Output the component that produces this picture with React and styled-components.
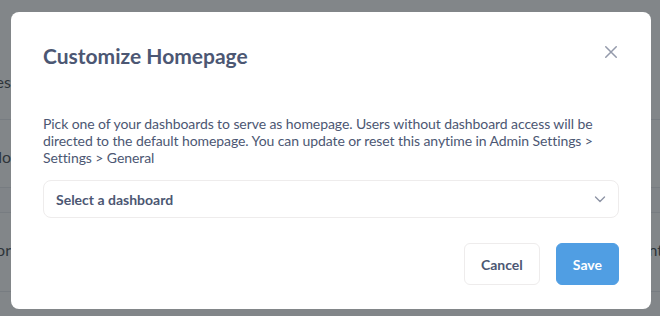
import React from "react";
import styled, { createGlobalStyle } from "styled-components";

const GlobalStyle = createGlobalStyle`
    html, body {
        margin: 0;
        padding: 0;
        font-family: Lato, "Open Sans", sans-serif;
        -webkit-font-smoothing: antialiased;
    }
`;

function CloseIcon() {
    return (
        <svg width="16" height="16" viewBox="0 0 16 16" fill="none">
            <path d="M2.75 2.75L13.25 13.25M13.25 2.75L2.75 13.25" stroke="currentColor" strokeWidth="1.5" strokeLinecap="round" />
        </svg>
    );
}

function ChevronIcon() {
    return (
        <svg width="12" height="12" viewBox="0 0 12 12" fill="none">
            <path d="M1.5 4L6 8.5L10.5 4" stroke="currentColor" strokeWidth="1.4" strokeLinecap="round" strokeLinejoin="round" />
        </svg>
    );
}

// rows of the page that sits under the modal
const rows = [
    { left: "Sales", right: "", height: 120, top: 44, line: true },
    { left: "Pueblo", right: "", height: 68, top: 6, line: true },
    { left: "", right: "", height: 25, top: 0, line: true, band: true },
    { left: "Vendor", right: "Count", height: 79, top: 0, bottom: 6, line: true },
    { left: "", right: "", height: 30, top: 0, line: false },
];

function App() {
    return (
        <>
            <GlobalStyle />
            <Page>
                {rows.map((r, i) => (
                    <BgRow key={i} $h={r.height} $top={r.top} $bottom={r.bottom || 0} $line={r.line} $band={r.band}>
                        <BgLeft>{r.left}</BgLeft>
                        <BgMid />
                        <BgRight>{r.right}</BgRight>
                    </BgRow>
                ))}
            </Page>
            <Overlay>
                <Modal>
                    <Header>
                        <Title>Customize Homepage</Title>
                        <CloseButton aria-label="Close">
                            <CloseIcon />
                        </CloseButton>
                    </Header>
                    <Description>
                        Pick one of your dashboards to serve as homepage. Users without dashboard access will be
                        directed to the default homepage. You can update or reset this anytime in Admin Settings &gt;
                        Settings &gt; General
                    </Description>
                    <Select>
                        <span>Select a dashboard</span>
                        <SelectIcon>
                            <ChevronIcon />
                        </SelectIcon>
                    </Select>
                    <Footer>
                        <Button>Cancel</Button>
                        <Button $primary>Save</Button>
                    </Footer>
                </Modal>
            </Overlay>
        </>
    );
}

export default App;

const Page = styled.div`
    height: 316px;
    overflow: hidden;
    background: #ffffff;
    display: flex;
    flex-direction: column;
`;

const BgRow = styled.div`
    flex: none;
    height: ${(p) => p.$h}px;
    display: grid;
    grid-template-columns: 11px 1fr 11px;
    align-items: center;
    padding-top: ${(p) => p.$top}px;
    padding-bottom: ${(p) => p.$bottom}px;
    border-bottom: ${(p) => (p.$line ? "1px solid #e4e6ea" : "none")};
    background: ${(p) => (p.$band ? "#fafbfc" : "transparent")};
    box-sizing: border-box;
    font-size: 16px;
    color: #2e353b;
`;

const BgLeft = styled.div`
    display: flex;
    justify-content: flex-end;
    white-space: nowrap;
    overflow: hidden;
`;

const BgMid = styled.div``;

const BgRight = styled.div`
    white-space: nowrap;
    overflow: hidden;
    direction: rtl;
    text-indent: -3px;
`;

const Overlay = styled.div`
    position: fixed;
    inset: 0;
    background: rgba(46, 53, 59, 0.6);
    display: flex;
    align-items: flex-start;
    justify-content: flex-start;
    padding: 12px 0 0 11px;
`;

const Modal = styled.div`
    width: 640px;
    box-sizing: border-box;
    background: #ffffff;
    border-radius: 8px;
    padding: 32px 32px 24px 32px;
    display: flex;
    flex-direction: column;
    color: #4c5773;
`;

const Header = styled.div`
    display: flex;
    justify-content: space-between;
    align-items: flex-start;
    margin-bottom: 47px;
`;

const Title = styled.h2`
    margin: 0;
    font-size: 21px;
    line-height: 24px;
    font-weight: 700;
    color: #4c5773;
`;

const CloseButton = styled.button`
    border: none;
    background: none;
    padding: 0;
    margin: 0;
    width: 16px;
    height: 16px;
    color: #949aab;
    display: flex;
    cursor: pointer;
`;

const Description = styled.p`
    margin: 0 0 14px 0;
    font-size: 14px;
    line-height: 17px;
    letter-spacing: -0.08px;
    color: #4c5773;
`;

const Select = styled.div`
    height: 38px;
    box-sizing: border-box;
    border: 1px solid #eeecec;
    border-radius: 8px;
    padding: 0 12px;
    display: flex;
    align-items: center;
    justify-content: space-between;
    font-size: 14px;
    font-weight: 700;
    color: #4c5773;
`;

const SelectIcon = styled.span`
    display: flex;
    color: #8e94a5;
`;

const Footer = styled.div`
    margin-top: 25px;
    display: flex;
    justify-content: flex-end;
    gap: 16px;
`;

const Button = styled.button`
    height: 42px;
    box-sizing: border-box;
    padding: 0 16px;
    border-radius: 6px;
    font-family: inherit;
    font-size: 14px;
    font-weight: 700;
    border: 1px solid ${(p) => (p.$primary ? "#509ee3" : "#eeecec")};
    background: ${(p) => (p.$primary ? "#509ee3" : "#ffffff")};
    color: ${(p) => (p.$primary ? "#ffffff" : "#4c5773")};
    cursor: pointer;
`;
